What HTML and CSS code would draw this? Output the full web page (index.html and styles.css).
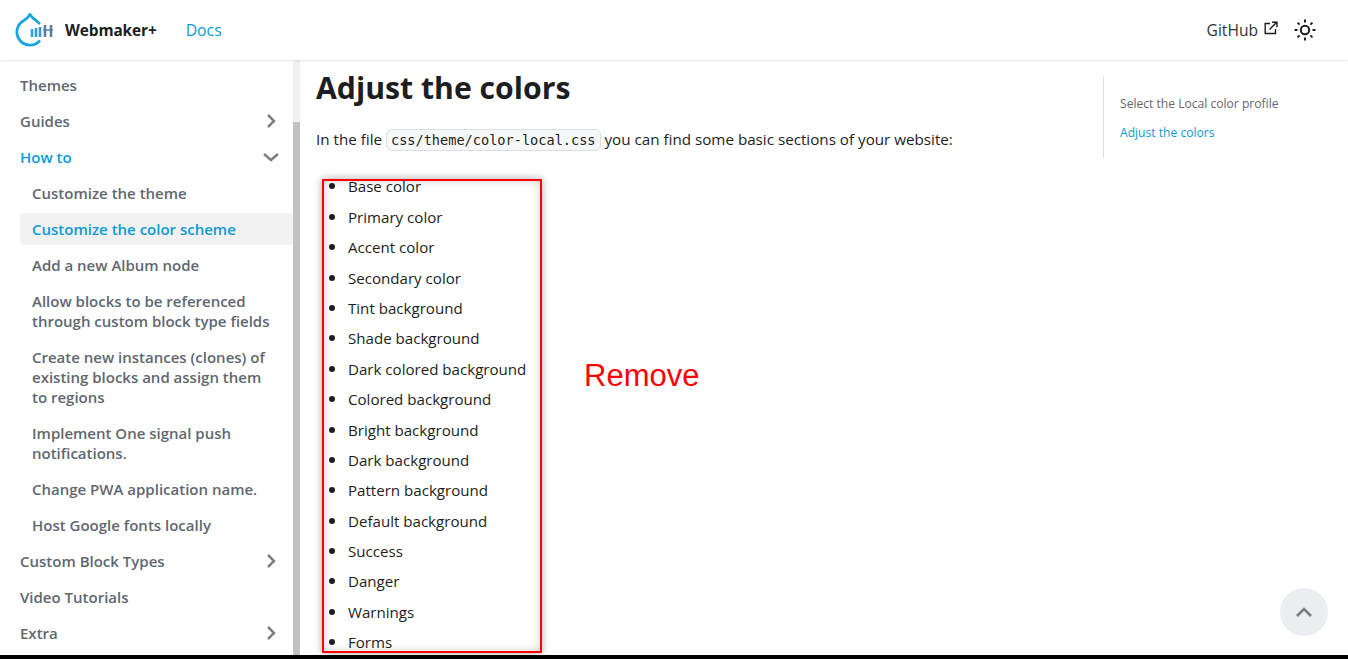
FILE: index.html
```html
<!doctype html>
<html lang="en">
	<head>
		<meta charset="UTF-8" />
		<meta name="viewport" content="width=device-width, initial-scale=1.0" />
		<title>Customize the color scheme - Webmaker+</title>
		<link rel="stylesheet" href="styles.css">
	</head>
	<body>
		<div class="page">
			<header class="navbar">
				<a class="brand" href="#">
					<svg class="logo" viewBox="0 0 40 34" width="40" height="34" fill="none">
						<path d="M25 27.300A13 13 0 1 1 8.500 7.800Q12.500 5.500 15 1.500Q17.500 5.500 21.500 7.800L25 11" stroke="#1ba5e0" stroke-width="2.800"/>
						<path d="M17 16v8M21 15v9M25 14v10" stroke="#2d9fd6" stroke-width="2.600"/>
						<path d="M30 12v12M36 12v12" stroke="#5b7f9c" stroke-width="2.600"/>
						<path d="M28 17h10" stroke="#5b7f9c" stroke-width="1.500"/>
					</svg>
					<strong>Webmaker+</strong>
				</a>
				<a class="nav-docs" href="#">Docs</a>
				<div class="nav-right">
					<a class="nav-github" href="#">GitHub
						<svg viewBox="0 0 14 14" width="14" height="14" fill="none" stroke="#1c1e21" stroke-width="1.400">
							<path d="M6 2.500H1.200V12.500H11.500V8"/>
							<path d="M5.500 8.500L12 2M8 1.200h5v5" />
						</svg>
					</a>
					<svg class="sun" viewBox="0 0 24 24" width="24" height="24" fill="none" stroke="#1c1e21" stroke-width="2">
						<circle cx="12" cy="12" r="4.200"/>
						<path d="M12 1.500v3M12 19.500v3M1.500 12h3M19.500 12h3M4.600 4.600l2 2M17.400 17.400l2 2M4.600 19.400l2-2M17.400 6.600l2-2"/>
					</svg>
				</div>
			</header>
			<div class="main">
				<aside class="sidebar">
					<nav class="menu">
						<a class="item" href="#">Themes</a>
						<a class="item" href="#">Guides
							<svg class="chev" viewBox="0 0 16 16"><path d="M5 2l6 6-6 6"/></svg>
						</a>
						<a class="item open" href="#">How to
							<svg class="chev" viewBox="0 0 16 16"><path d="M1 5l7 6 7-6"/></svg>
						</a>
						<div class="sub">
							<a class="item" href="#">Customize the theme</a>
							<a class="item active" href="#">Customize the color scheme</a>
							<a class="item" href="#">Add a new Album node</a>
							<a class="item" href="#">Allow blocks to be referenced through custom block type fields</a>
							<a class="item" href="#">Create new instances (clones) of existing blocks and assign them to regions</a>
							<a class="item" href="#">Implement One signal push notifications.</a>
							<a class="item" href="#">Change PWA application name.</a>
							<a class="item" href="#">Host Google fonts locally</a>
						</div>
						<a class="item" href="#">Custom Block Types
							<svg class="chev" viewBox="0 0 16 16"><path d="M5 2l6 6-6 6"/></svg>
						</a>
						<a class="item" href="#">Video Tutorials</a>
						<a class="item" href="#">Extra
							<svg class="chev" viewBox="0 0 16 16"><path d="M5 2l6 6-6 6"/></svg>
						</a>
					</nav>
					<div class="scroll-track"><div class="scroll-thumb"></div></div>
				</aside>
				<main class="content">
					<h1>Adjust the colors</h1>
					<p>In the file <code>css/theme/color-local.css</code> you can find some basic sections of your website:</p>
					<ul>
						<li>Base color</li>
						<li>Primary color</li>
						<li>Accent color</li>
						<li>Secondary color</li>
						<li>Tint background</li>
						<li>Shade background</li>
						<li>Dark colored background</li>
						<li>Colored background</li>
						<li>Bright background</li>
						<li>Dark background</li>
						<li>Pattern background</li>
						<li>Default background</li>
						<li>Success</li>
						<li>Danger</li>
						<li>Warnings</li>
						<li>Forms</li>
					</ul>
				</main>
				<aside class="toc">
					<div class="toc-list">
						<a class="toc-link" href="#">Select the Local color profile</a>
						<a class="toc-link current" href="#">Adjust the colors</a>
					</div>
				</aside>
			</div>
			<div class="bottom-bar"></div>
		</div>
		<div class="mark-box"></div>
		<div class="mark-label">Remove</div>
		<button class="to-top" type="button">
			<svg viewBox="0 0 16 10" width="16" height="10" fill="none" stroke="#7a7b7d" stroke-width="2.600"><path d="M1 9l7-7 7 7"/></svg>
		</button>
	</body>
</html>
```

FILE: styles.css
```css
html, body {
	margin: 0;
	height: 100%;
	overflow: hidden;
}
body {
	font-family: 'Open Sans', 'Noto Sans', sans-serif;
	font-size: 16px;
	color: #1c1e21;
	background: white;
}
a {
	color: inherit;
	text-decoration: none;
}
.page {
	display: flex;
	flex-direction: column;
	height: 659px;
}
.navbar {
	display: flex;
	align-items: center;
	flex: none;
	height: 60px;
	padding: 0 31px 0 15px;
	box-shadow: 0 1px 2px rgba(0,0,0,0.1);
	position: relative;
	z-index: 2;
	background: white;
}
.brand {
	display: flex;
	align-items: center;
	gap: 10px;
	margin-right: 29px;
	font-size: 15.400px;
}
.brand strong {
	font-weight: 700;
	letter-spacing: -0.1px;
}
.nav-docs {
	color: #0d9ad6;
	font-size: 15.800px;
	font-weight: 500;
}
.nav-right {
	display: flex;
	align-items: center;
	gap: 15px;
	margin-left: auto;
}
.nav-github {
	display: flex;
	align-items: center;
	gap: 6px;
	font-size: 15.600px;
	color: #333;
}
.nav-github svg {
	margin-top: -5px;
}
.main {
	display: flex;
	flex: 1;
	min-height: 0;
	overflow: hidden;
}
.sidebar {
	display: flex;
	flex: none;
	width: 300px;
	overflow: hidden;
}
.menu {
	flex: 1;
	padding: 5px 0 0 8px;
	font-size: 15px;
	font-weight: 600;
	line-height: 20px;
	color: #606770;
}
.item {
	display: flex;
	align-items: center;
	justify-content: space-between;
	margin-top: 4px;
	padding: 6px 13px 6px 12px;
	border-radius: 4px;
}
.item.open {
	color: #0d9ad6;
}
.sub {
	padding-left: 12px;
}
.sub .item {
	padding-right: 14px;
}
.active {
	color: #0d9ad6;
	background: #f2f2f2;
}
.chev {
	width: 16px;
	height: 16px;
	flex: none;
	margin-right: 1px;
	fill: none;
	stroke: #7f7f7f;
	stroke-width: 2.500;
}
.scroll-track {
	display: flex;
	flex: none;
	width: 7px;
	padding-top: 62px;
	background: #f1f1f1;
}
.scroll-thumb {
	flex: 1;
	background: #c1c1c1;
}
.content {
	flex: 1;
	min-width: 0;
	padding: 0 16px;
	line-height: 26.400px;
	overflow: hidden;
}
h1 {
	margin: 6px 0 0;
	font-size: 30.200px;
	line-height: 44px;
	font-weight: 700;
}
.content p {
	margin: 16px 0 0;
	font-size: 15.200px;
}
code {
	padding: 2px 4px;
	background: #f6f7f8;
	border: 1px solid rgba(0,0,0,0.1);
	border-radius: 6px;
	font-family: 'DejaVu Sans Mono', monospace;
	font-size: 13.600px;
	color: #1c1e21;
}
ul {
	margin: 19px 0 0;
	padding-left: 32px;
	font-size: 15.100px;
}
li {
	height: 26.400px;
}
li + li {
	margin-top: 4px;
}
li::marker {
	font-size: 18px;
}
.toc {
	flex: none;
	width: 245px;
	padding-top: 16px;
}
.toc-list {
	display: flex;
	flex-direction: column;
	gap: 12px;
	height: 82px;
	box-sizing: border-box;
	padding: 19px 0 0 16px;
	border-left: 1px solid #dadde1;
	font-size: 12.100px;
	line-height: 17px;
	color: #606770;
}
.current {
	color: #0d9ad6;
}
.bottom-bar {
	flex: none;
	height: 4px;
	background: black;
}
.mark-box {
	position: absolute;
	left: 322px;
	top: 179px;
	width: 216px;
	height: 470px;
	border: 2px solid red;
	box-shadow: 0 0 8px rgba(0,0,0,0.35), inset 0 0 8px rgba(0,0,0,0.2);
}
.mark-label {
	position: absolute;
	left: 584px;
	top: 357px;
	font-family: 'Liberation Sans', sans-serif;
	font-size: 31px;
	line-height: 37px;
	color: red;
}
.to-top {
	position: absolute;
	left: 1280px;
	top: 588px;
	display: flex;
	align-items: center;
	justify-content: center;
	width: 48px;
	height: 48px;
	padding: 0;
	border: none;
	border-radius: 50%;
	background: #ebedf0;
}
```
